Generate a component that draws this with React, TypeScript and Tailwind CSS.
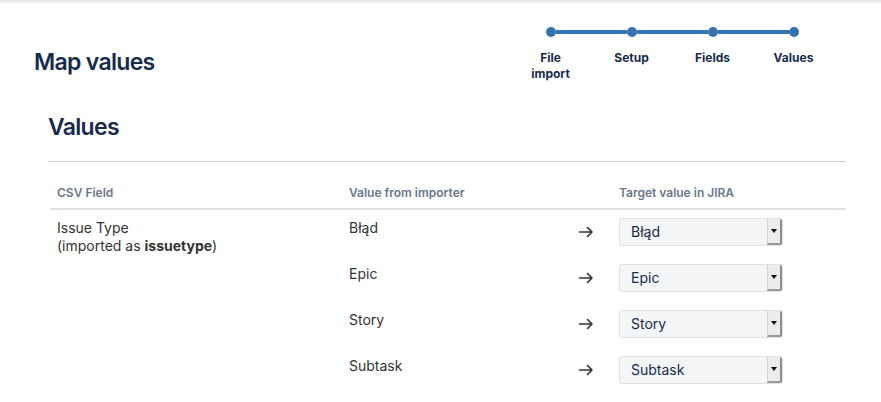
const steps = ["File\nimport", "Setup", "Fields", "Values"];
const values = ["Błąd", "Epic", "Story", "Subtask", ""];

function Arrow() {
    return (
        <svg width="16" height="12" viewBox="0 0 16 12" fill="none" stroke="#333" strokeWidth="1.6" strokeLinecap="round" strokeLinejoin="round">
            <path d="M1.5 6H14M9.5 1.5 14 6l-4.5 4.5" />
        </svg>
    );
}

function Select({ value }: { value: string }) {
    return (
        <div className="flex h-[28px] w-[164px] overflow-hidden rounded-[3px] border border-[#dfe1e6] bg-[#f4f5f7]">
            <span className="flex-1 pl-[11px] text-[14px] leading-[26px] text-[#172b4d]">{value}</span>
            <div className="flex w-[15px] items-center justify-center border-l border-r-2 border-b-2 border-l-[#d4d4d4] border-r-[#8f8f8f] border-b-[#9a9a9a] bg-[#ececec]">
                <svg width="6" height="4" viewBox="0 0 6 4">
                    <path d="M0 0h6L3 4z" fill="#111" />
                </svg>
            </div>
        </div>
    );
}

export default function App() {
    return (
        <div className="min-h-screen w-full bg-white font-[Inter,sans-serif]">
            {/* top shadow */}
            <div className="h-[4px] bg-gradient-to-b from-[#e2e2e2] to-white" />

            <header className="flex items-start justify-between pl-[34px] pr-[47px]">
                <h1 className="mt-[42px] text-[23px] font-semibold leading-[32px] tracking-[-0.03em] text-[#172b4d]">Map values</h1>

                <ol className="mt-[23px] flex">
                    {steps.map((s, i) => (
                        <li key={s} className="flex w-[81px] flex-col items-center">
                            <div className="flex h-[10px] w-full items-center">
                                <div className={i === 0 ? "h-[4px] flex-1" : "h-[4px] flex-1 bg-[#3572b0]"} />
                                <div className="h-[10px] w-[10px] rounded-full bg-[#3572b0]" />
                                <div className={i === steps.length - 1 ? "h-[4px] flex-1" : "h-[4px] flex-1 bg-[#3572b0]"} />
                            </div>
                            <span className="mt-[13px] whitespace-pre-line text-center text-[12px] font-bold leading-4 text-[#172b4d]">
                                {s}
                            </span>
                        </li>
                    ))}
                </ol>
            </header>

            <section className="pl-[48px] pr-[35px]">
                <h2 className="mt-[29px] text-[23px] font-semibold leading-[32px] tracking-[-0.03em] text-[#172b4d]">Values</h2>
                <div className="mt-[18px] border-t border-[#ccc]" />

                <div className="ml-[2px] mt-[16px]">
                    {/* table head */}
                    <div className="flex border-b-2 border-[#dfe1e6] py-[7px] text-[12px] font-semibold leading-4 text-[#6b778c]">
                        <div className="w-[291px] pl-[7px]">CSV Field</div>
                        <div className="w-[229px] pl-2">Value from importer</div>
                        <div className="w-[32px]" />
                        <div className="pl-[17px]">Target value in JIRA</div>
                    </div>

                    {/* table body */}
                    <div className="flex text-[14px] text-[#333]">
                        <div className="w-[291px] pl-[7px] pt-[9px] leading-[18px]">
                            <div>Issue Type</div>
                            <div>
                                (imported as <b>issuetype</b>)
                            </div>
                        </div>
                        <div className="flex-1">
                            {values.map((v, i) => (
                                <div key={i} className="flex pt-2 pb-[10px]">
                                    <div className="w-[229px] pl-2 leading-5">{v}</div>
                                    <div className="flex h-[28px] w-[32px] items-center justify-center">
                                        {v && <Arrow />}
                                    </div>
                                    <div className="pl-[17px]">
                                        <Select value={v} />
                                    </div>
                                </div>
                            ))}
                        </div>
                    </div>
                </div>
            </section>
        </div>
    );
}
